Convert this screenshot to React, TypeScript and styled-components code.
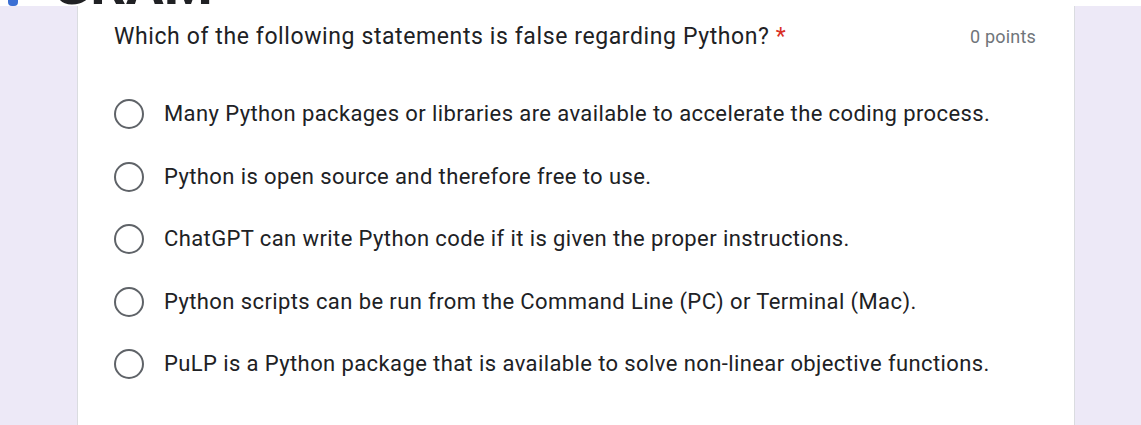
import React from "react"
import styled, { createGlobalStyle } from "styled-components"

const GlobalStyle = createGlobalStyle`
  body {
    margin: 0;
    background: #ede9f7;
    font-family: Roboto, "Liberation Sans", Arial, sans-serif;
  }
`

const options = [
  "Many Python packages or libraries are available to accelerate the coding process.",
  "Python is open source and therefore free to use.",
  "ChatGPT can write Python code if it is given the proper instructions.",
  "Python scripts can be run from the Command Line (PC) or Terminal (Mac).",
  "PuLP is a Python package that is available to solve non-linear objective functions.",
]

const App: React.FC = () => (
  <>
    <GlobalStyle />
    <TopStrip>
      <Dot />
      <Heading>GRAM</Heading>
    </TopStrip>
    <Card>
      <QuestionRow>
        <Question>
          Which of the following statements is false regarding Python? <Star>*</Star>
        </Question>
        <Points>0 points</Points>
      </QuestionRow>
      <OptionList>
        {options.map((o) => (
          <Option key={o}>
            <Radio />
            <OptionText>{o}</OptionText>
          </Option>
        ))}
      </OptionList>
    </Card>
  </>
)

const TopStrip = styled.div`
  height: 6px;
  background: #fff;
  overflow: hidden;
  display: flex;
  align-items: flex-end;
  padding-left: 8px;
  gap: 34px;
`

const Dot = styled.div`
  width: 10px;
  height: 6px;
  background: #3b6fd4;
  border-radius: 0 0 4px 4px;
  flex: none;
`

const Heading = styled.div`
  font-family: Roboto, "Liberation Sans", sans-serif;
  font-weight: 700;
  font-size: 56px;
  line-height: 42px;
  color: #202124;
  flex: none;
`

const Card = styled.div`
  margin-left: 77px;
  width: 998px;
  min-height: 419px;
  box-sizing: border-box;
  background: #fff;
  border-left: 1px solid #dadce0;
  border-right: 1px solid #dadce0;
  padding: 17px 38px 0 36px;
`

const QuestionRow = styled.div`
  display: flex;
  justify-content: space-between;
  align-items: flex-start;
`

const Question = styled.div`
  font-size: 23px;
  line-height: 28px;
  color: #202124;
  letter-spacing: 0.6px;
`

const Star = styled.span`
  color: #d93025;
`

const Points = styled.div`
  font-size: 18px;
  line-height: 28px;
  color: #70757a;
  letter-spacing: 0.2px;
`

const OptionList = styled.div`
  margin-top: 47px;
  display: flex;
  flex-direction: column;
  gap: 30.5px;
`

const Option = styled.div`
  display: flex;
  align-items: center;
  gap: 20px;
  height: 32px;
`

const Radio = styled.div`
  width: 26px;
  height: 26px;
  border: 2.5px solid #5f6368;
  border-radius: 50%;
  flex: none;
`

const OptionText = styled.div`
  font-size: 22px;
  line-height: 28px;
  color: #202124;
  letter-spacing: 0.4px;
`

export default App
